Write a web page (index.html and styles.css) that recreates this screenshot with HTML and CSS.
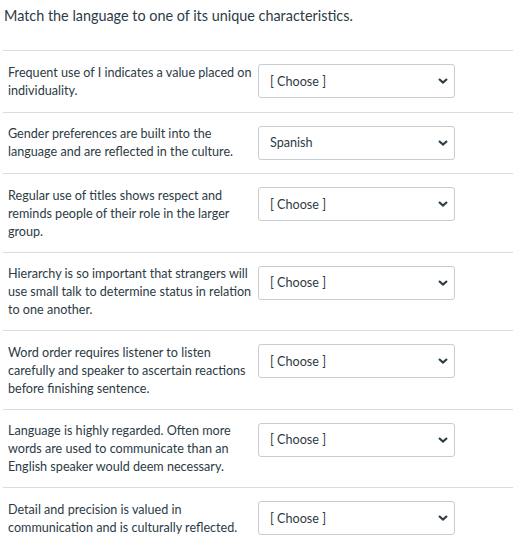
FILE: index.html
```html
<!DOCTYPE html>
<html>
<head>
<meta charset="utf-8">
<link rel="stylesheet" href="styles.css">
</head>
<body>
<div class="question">
  <p class="prompt">Match the language to one of its unique characteristics.</p>
  <div class="rows">
    <div class="row">
      <div class="label">Frequent use of I indicates a value placed on individuality.</div>
      <div class="select"><span class="value">[ Choose ]</span><svg class="chev" viewBox="0 0 10 6" width="10" height="6"><path d="M1 1 L5 4.5 L9 1" fill="none" stroke="#2d3b45" stroke-width="2.2"/></svg></div>
    </div>
    <div class="row">
      <div class="label">Gender preferences are built into the language and are reflected in the culture.</div>
      <div class="select"><span class="value">Spanish</span><svg class="chev" viewBox="0 0 10 6" width="10" height="6"><path d="M1 1 L5 4.5 L9 1" fill="none" stroke="#2d3b45" stroke-width="2.2"/></svg></div>
    </div>
    <div class="row">
      <div class="label">Regular use of titles shows respect and reminds people of their role in the larger group.</div>
      <div class="select"><span class="value">[ Choose ]</span><svg class="chev" viewBox="0 0 10 6" width="10" height="6"><path d="M1 1 L5 4.5 L9 1" fill="none" stroke="#2d3b45" stroke-width="2.2"/></svg></div>
    </div>
    <div class="row">
      <div class="label">Hierarchy is so important that strangers will use small talk to determine status in relation to one another.</div>
      <div class="select"><span class="value">[ Choose ]</span><svg class="chev" viewBox="0 0 10 6" width="10" height="6"><path d="M1 1 L5 4.5 L9 1" fill="none" stroke="#2d3b45" stroke-width="2.2"/></svg></div>
    </div>
    <div class="row">
      <div class="label">Word order requires listener to listen carefully and speaker to ascertain reactions before finishing sentence.</div>
      <div class="select"><span class="value">[ Choose ]</span><svg class="chev" viewBox="0 0 10 6" width="10" height="6"><path d="M1 1 L5 4.5 L9 1" fill="none" stroke="#2d3b45" stroke-width="2.2"/></svg></div>
    </div>
    <div class="row">
      <div class="label">Language is highly regarded. Often more words are used to communicate than an English speaker would deem necessary.</div>
      <div class="select"><span class="value">[ Choose ]</span><svg class="chev" viewBox="0 0 10 6" width="10" height="6"><path d="M1 1 L5 4.5 L9 1" fill="none" stroke="#2d3b45" stroke-width="2.2"/></svg></div>
    </div>
    <div class="row">
      <div class="label">Detail and precision is valued in communication and is culturally reflected.</div>
      <div class="select"><span class="value">[ Choose ]</span><svg class="chev" viewBox="0 0 10 6" width="10" height="6"><path d="M1 1 L5 4.5 L9 1" fill="none" stroke="#2d3b45" stroke-width="2.2"/></svg></div>
    </div>
  </div>
</div>
</body>
</html>
```
FILE: styles.css
```css
html, body {
  margin: 0;
  padding: 0;
  background: #fff;
}
body {
  font-family: Lato, "Open Sans", sans-serif;
  color: #2d3b45;
}
.question {
  padding-left: 3px;
}
.prompt {
  margin: 0;
  padding: 6px 0 0 1px;
  font-size: 14.4px;
  line-height: 20px;
  height: 44px;
}
.row {
  display: flex;
  align-items: flex-start;
  border-top: 1px solid #d9dde0;
  padding: 12.5px 0 11px 5px;
}
.label {
  width: 247px;
  font-size: 12.6px;
  line-height: 18px;
}
.select {
  margin: 0.5px 0 2.5px 3px;
  width: 197px;
  height: 34px;
  box-sizing: border-box;
  border: 1px solid #c7cdd1;
  border-radius: 3px;
  display: flex;
  align-items: center;
  justify-content: space-between;
  padding: 0 6px 0 11px;
  font-size: 12.6px;
}
.chev {
  display: block;
}
```
